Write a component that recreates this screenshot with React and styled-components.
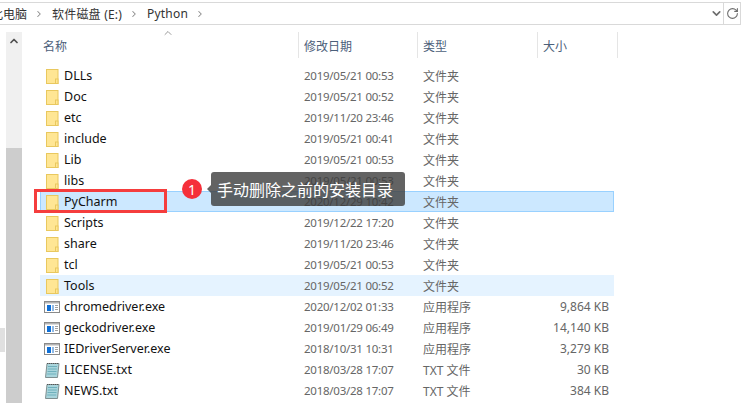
import React from 'react';
import styled, {createGlobalStyle} from 'styled-components';
import {ChevronRight, ChevronUp, ChevronDown, RotateCw} from 'lucide-react';

const GlobalStyle = createGlobalStyle`
  html, body {
    margin: 0;
    padding: 0;
    background: #fff;
    overflow: hidden;
  }
  * {
    box-sizing: border-box;
  }
`;

const FONT = `"Noto Sans", "Noto Sans CJK SC", sans-serif`;

const files = [
  {name: 'DLLs', date: '2019/05/21 00:53', type: '文件夹'},
  {name: 'Doc', date: '2019/05/21 00:52', type: '文件夹'},
  {name: 'etc', date: '2019/11/20 23:46', type: '文件夹'},
  {name: 'include', date: '2019/05/21 00:41', type: '文件夹'},
  {name: 'Lib', date: '2019/05/21 00:53', type: '文件夹'},
  {name: 'libs', date: '2019/05/21 00:53', type: '文件夹'},
  {name: 'PyCharm', date: '2020/12/29 10:42', type: '文件夹', state: 'selected'},
  {name: 'Scripts', date: '2019/12/22 17:20', type: '文件夹'},
  {name: 'share', date: '2019/11/20 23:46', type: '文件夹'},
  {name: 'tcl', date: '2019/05/21 00:53', type: '文件夹'},
  {name: 'Tools', date: '2019/05/21 00:52', type: '文件夹', state: 'hover'},
  {name: 'chromedriver.exe', date: '2020/12/02 01:33', type: '应用程序', size: '9,864 KB', icon: 'exe'},
  {name: 'geckodriver.exe', date: '2019/01/29 06:49', type: '应用程序', size: '14,140 KB', icon: 'exe'},
  {name: 'IEDriverServer.exe', date: '2018/10/31 10:31', type: '应用程序', size: '3,279 KB', icon: 'exe'},
  {name: 'LICENSE.txt', date: '2018/03/28 17:07', type: 'TXT 文件', size: '30 KB', icon: 'txt'},
  {name: 'NEWS.txt', date: '2018/03/28 17:07', type: 'TXT 文件', size: '384 KB', icon: 'txt'},
];

const Page = styled.div`
  width: 743px;
  height: 403px;
  overflow: hidden;
  position: relative;
  background: #fff;
  font-family: ${FONT};
  padding-top: 2px;
`;

const AddressBar = styled.div`
  height: 23px;
  width: 741px;
  border: 1px solid #d9d9d9;
  border-left: none;
  display: flex;
  align-items: center;
  font-size: 12px;
  color: #333;
`;

const Crumbs = styled.div`
  flex: 1;
  display: flex;
  align-items: center;
  overflow: hidden;
`;

const FirstCrumb = styled.span`
  white-space: nowrap;
  margin-left: -9px;
`;

const Crumb = styled.span`
  white-space: nowrap;
  letter-spacing: 0.2px;
`;

const Sep = styled.span`
  display: flex;
  color: #8a8a8a;
  width: 18px;
  margin-left: 7px;
`;

const DropBtn = styled.div`
  width: 18px;
  padding-left: 5px;
  display: flex;
  color: #6d6d6d;
`;

const RefreshBtn = styled.div`
  width: 17px;
  height: 100%;
  border-left: 1px solid #d9d9d9;
  display: flex;
  align-items: center;
  justify-content: center;
  color: #6d6d6d;
`;

const Body = styled.div`
  display: flex;
  padding-top: 7px;
  height: 378px;
`;

const Gutter = styled.div`
  width: 6px;
  flex: none;
  padding-top: 296px;
`;

const GutterMark = styled.div`
  width: 5px;
  height: 24px;
  background: #e0e0e0;
`;

const Scrollbar = styled.div`
  width: 16px;
  flex: none;
  height: 385px;
  background: #f0f0f0;
  display: flex;
  flex-direction: column;
  align-items: center;
  color: #505050;
`;

const ScrollUp = styled.div`
  height: 116px;
  padding-top: 3px;
  display: flex;
  flex: none;
`;

const Thumb = styled.div`
  flex: 1;
  width: 100%;
  background: #cdcdcd;
`;

const List = styled.div`
  margin-left: 18px;
  width: 578px;
  position: relative;
`;

const Header = styled.div`
  display: grid;
  grid-template-columns: 259px 119px 120px 80px;
  height: 26px;
  margin-bottom: 7px;
`;

const HeaderCell = styled.div`
  border-right: 1px solid #e5e5e5;
  font-size: 12px;
  color: #4c607a;
  display: flex;
  align-items: center;
  padding-left: ${props => props.pad}px;
  padding-top: 1px;
`;

const SortArrow = styled.div`
  position: absolute;
  left: 122px;
  top: -5px;
  color: #7a7a7a;
  display: flex;
`;

const Row = styled.div`
  display: grid;
  grid-template-columns: 256px 120px 93px 100px;
  width: 574px;
  height: 21px;
  align-items: center;
  font-size: 12px;
  color: #666;
  background: ${props =>
    props.state === 'selected' ? '#cce8ff' : props.state === 'hover' ? '#e5f3ff' : 'transparent'};
  box-shadow: ${props => (props.state === 'selected' ? 'inset 0 0 0 1px #99d1ff' : 'none')};
`;

const NameCell = styled.div`
  display: flex;
  align-items: center;
  color: #111;
  font-size: 12.5px;
  padding-left: 4px;
  gap: 4px;
  white-space: nowrap;
`;

const DateCell = styled.div`
  padding-left: 8px;
  font-size: 11.5px;
  white-space: nowrap;
  letter-spacing: -0.25px;
`;

const TypeCell = styled.div`
  padding-left: 7px;
  white-space: nowrap;
`;

const SizeCell = styled.div`
  text-align: right;
  white-space: nowrap;
`;

const Outline = styled.div`
  position: absolute;
  left: -6px;
  top: 157px;
  width: 133px;
  height: 24px;
  border: 3px solid #f53d3d;
`;

const Badge = styled.div`
  position: absolute;
  left: 142px;
  top: 147px;
  width: 20px;
  height: 20px;
  border-radius: 50%;
  background: #f5303a;
  color: #fff;
  font-size: 14px;
  display: flex;
  align-items: center;
  justify-content: center;
`;

const Tip = styled.div`
  position: absolute;
  left: 171px;
  top: 140px;
  width: 194px;
  height: 34px;
  border-radius: 3px;
  background: rgba(60, 60, 60, 0.8);
  color: #fff;
  font-size: 16px;
  display: flex;
  align-items: center;
  padding-left: 6px;
  white-space: nowrap;
  &::before {
    content: '';
    position: absolute;
    left: -4px;
    top: 13px;
    border-top: 4px solid transparent;
    border-bottom: 4px solid transparent;
    border-right: 4px solid rgba(60, 60, 60, 0.8);
  }
`;

const FolderIcon = () => (
  <svg width="16" height="16" viewBox="0 0 16 16">
    <rect x="2.5" y="1.5" width="11.5" height="14" fill="#ffe694" stroke="#e9c85e" />
    <rect x="11.5" y="11" width="2.5" height="4.5" fill="#ffe694" stroke="#e9c85e" />
  </svg>
);

const ExeIcon = () => (
  <svg width="16" height="16" viewBox="0 0 16 16">
    <rect x="0.5" y="2.5" width="15" height="11" fill="#fff" stroke="#8a8a8a" />
    <rect x="1" y="3" width="14" height="1.5" fill="#b5b5b5" />
    <rect x="3" y="6" width="4" height="6" fill="#0f6fd6" />
    <rect x="8" y="6" width="2" height="6" fill="#8fb9e6" />
    <path d="M11 6.5h3M11 8.5h3M11 10.5h3" stroke="#a0a0a0" />
  </svg>
);

const TxtIcon = () => (
  <svg width="16" height="16" viewBox="0 0 16 16">
    <path d="M3 1.5h12L13.5 15.5h-12z" fill="#a9d5dc" stroke="#7e8e90" />
    <path d="M4 4.5h9M3.8 7h9M3.5 9.5h9M3.2 12h9" stroke="#6fb0bc" />
    <path d="M3 1.5h12" stroke="#555" strokeDasharray="1 1" />
  </svg>
);

const icons = {exe: ExeIcon, txt: TxtIcon};

const App = () => {
  return (
    <Page>
      <GlobalStyle />
      <AddressBar>
        <Crumbs>
          <FirstCrumb>此电脑</FirstCrumb>
          <Sep><ChevronRight size={10} strokeWidth={2.5} /></Sep>
          <Crumb>软件磁盘 (E:)</Crumb>
          <Sep><ChevronRight size={10} strokeWidth={2.5} /></Sep>
          <Crumb>Python</Crumb>
          <Sep><ChevronRight size={10} strokeWidth={2.5} /></Sep>
        </Crumbs>
        <DropBtn><ChevronDown size={13} strokeWidth={3} /></DropBtn>
        <RefreshBtn><RotateCw size={13} strokeWidth={2} /></RefreshBtn>
      </AddressBar>
      <Body>
        <Gutter><GutterMark /></Gutter>
        <Scrollbar>
          <ScrollUp><ChevronUp size={12} strokeWidth={3.5} /></ScrollUp>
          <Thumb />
        </Scrollbar>
        <List>
          <SortArrow><ChevronUp size={12} strokeWidth={1.5} /></SortArrow>
          <Header>
            <HeaderCell pad={3}>名称</HeaderCell>
            <HeaderCell pad={5}>修改日期</HeaderCell>
            <HeaderCell pad={5}>类型</HeaderCell>
            <HeaderCell pad={5}>大小</HeaderCell>
          </Header>
          {files.map(file => {
            const Icon = icons[file.icon] || FolderIcon;
            return (
              <Row key={file.name} state={file.state}>
                <NameCell><Icon />{file.name}</NameCell>
                <DateCell>{file.date}</DateCell>
                <TypeCell>{file.type}</TypeCell>
                <SizeCell>{file.size}</SizeCell>
              </Row>
            );
          })}
          <Outline />
          <Badge>1</Badge>
          <Tip>手动删除之前的安装目录</Tip>
        </List>
      </Body>
    </Page>
  );
};

export default App;
